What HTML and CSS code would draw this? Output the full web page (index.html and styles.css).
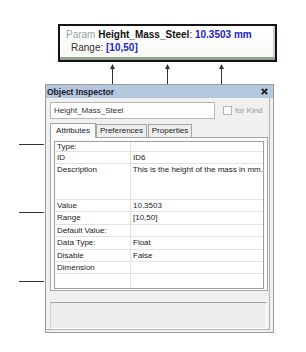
FILE: index.html
```html
<!DOCTYPE html>
<html>
<head>
<meta charset="utf-8">
<link rel="stylesheet" href="styles.css">
</head>
<body>
<div class="page">
  <div class="tip">
    <div class="tip-line"><span class="muted">Param</span> <b>Height_Mass_Steel</b>: <b class="val">10.3503 mm</b></div>
    <div class="tip-line indent">Range: <b class="val">[10,50]</b></div>
  </div>
  <svg class="arrows" width="306" height="22" viewBox="0 0 306 22">
    <g stroke="#333" stroke-width="1" fill="none">
      <line x1="112.5" y1="4" x2="112.5" y2="22"/>
      <line x1="167.5" y1="4" x2="167.5" y2="22"/>
      <line x1="221.5" y1="4" x2="221.5" y2="22"/>
    </g>
    <g fill="#333">
      <polygon points="112.5,2 110,7 115,7"/>
      <polygon points="167.5,2 165,7 170,7"/>
      <polygon points="221.5,2 219,7 224,7"/>
    </g>
  </svg>
  <div class="main">
    <svg class="gutter" width="45" height="249" viewBox="0 0 45 249">
      <g stroke="#333" stroke-width="1">
        <line x1="19" y1="60.5" x2="44" y2="60.5"/>
        <line x1="19" y1="128.5" x2="44" y2="128.5"/>
        <line x1="19" y1="197.5" x2="44" y2="197.5"/>
      </g>
    </svg>
    <div class="dialog">
      <div class="titlebar">
        <span class="title">Object Inspector</span>
        <svg class="close" width="7" height="7" viewBox="0 0 7 7"><path d="M0.8 0.8 L6.2 6.2 M6.2 0.8 L0.8 6.2" stroke="#1a1a1a" stroke-width="1.8"/></svg>
      </div>
      <div class="dbody">
        <div class="namerow">
          <div class="input">Height_Mass_Steel</div>
          <span class="check"></span>
          <span class="forkind">for Kind</span>
        </div>
        <div class="tabs">
          <div class="tab active">Attributes</div>
          <div class="tab">Preferences</div>
          <div class="tab">Properties</div>
        </div>
        <div class="panel">
          <div class="table">
            <div class="row r-type"><div class="k">Type:</div><div class="v"></div></div>
            <div class="row"><div class="k">ID</div><div class="v">ID6</div></div>
            <div class="row r-desc"><div class="k">Description</div><div class="v">This is the height of the mass in mm.</div></div>
            <div class="row"><div class="k">Value</div><div class="v">10.3503</div></div>
            <div class="row r13"><div class="k">Range</div><div class="v">[10,50]</div></div>
            <div class="row"><div class="k">Default Value:</div><div class="v"></div></div>
            <div class="row r13"><div class="k">Data Type:</div><div class="v">Float</div></div>
            <div class="row"><div class="k">Disable</div><div class="v">False</div></div>
            <div class="row"><div class="k">Dimension</div><div class="v"></div></div>
            <div class="row filler"><div class="k"></div><div class="v"></div></div>
          </div>
        </div>
        <div class="status"></div>
      </div>
    </div>
  </div>
</div>
</body>
</html>
```
FILE: styles.css
```css
html, body {
  margin: 0;
  padding: 0;
  background: #fff;
}
body {
  width: 306px;
  height: 352px;
  overflow: hidden;
  font-family: "Liberation Sans", Arial, sans-serif;
}
.page {
  padding-top: 24px;
}
.tip {
  margin-left: 58px;
  width: 219px;
  height: 38px;
  box-sizing: border-box;
  border: 2px solid #141414;
  background: linear-gradient(#ffffff, #f6f9f4);
  box-shadow: inset 0 -3px 0 #93a38d, inset -2px 0 0 #c9d2c5;
  padding: 2px 0 0 6px;
  font-size: 10px;
  line-height: 13px;
  color: #333;
  white-space: nowrap;
}
.tip b { color: #111; }
.tip .muted { color: #98a596; }
.tip .val { color: #2323c4; }
.tip .indent { padding-left: 5px; }
.arrows, .gutter { display: block; }
.main {
  display: flex;
  align-items: flex-start;
}
.dialog {
  width: 229px;
  height: 249px;
  box-sizing: border-box;
  border: 1px solid #9c9c9c;
  background: #f0f0f0;
  box-shadow: inset -3px -2px 0 #f0f0f0, inset -4px -3px 0 #b4b4b4;
  display: flex;
  flex-direction: column;
  font-size: 8px;
  color: #222;
}
.titlebar {
  height: 13px;
  background: #b3c7df;
  display: flex;
  align-items: center;
  justify-content: space-between;
  padding: 0 5px 0 1px;
}
.title {
  font-weight: bold;
  font-size: 8.5px;
  color: #1a1a2a;
}
.close { display: block; }
.dbody {
  padding: 4px 0 0 4px;
  display: flex;
  flex-direction: column;
}
.namerow {
  display: flex;
  align-items: center;
  height: 17px;
}
.input {
  width: 165px;
  height: 17px;
  box-sizing: border-box;
  border: 1px solid #b2b6bc;
  background: #fff;
  padding-left: 3px;
  line-height: 15px;
  color: #333;
}
.check {
  width: 9px;
  height: 9px;
  box-sizing: border-box;
  border: 1px solid #b6b6b6;
  background: #fafafa;
  margin: 0 3px 0 8px;
}
.forkind { color: #9a9a9a; }
.tabs {
  display: flex;
  margin-top: 4px;
  height: 14px;
  align-items: flex-end;
}
.tab {
  height: 13px;
  box-sizing: border-box;
  border: 1px solid #a4a4a4;
  border-bottom: none;
  background: #ededed;
  line-height: 12px;
  padding: 0 2px;
  text-align: center;
  margin-right: 1px;
}
.tab.active {
  height: 15px;
  width: 46px;
  background: #fbfbfb;
  margin-bottom: -1px;
  position: relative;
  z-index: 1;
  line-height: 13px;
  margin-right: 0;
}
.tab:nth-child(2) { width: 51px; }
.tab:nth-child(3) { width: 44px; }
.panel {
  width: 218px;
  height: 154px;
  box-sizing: border-box;
  border: 1px solid #a4a4a4;
  background: #fbfbfb;
  padding: 3px 3px 1px 3px;
}
.table {
  height: 148px;
  box-sizing: border-box;
  border: 1px solid #9e9e9e;
  background: #fff;
  display: flex;
  flex-direction: column;
  overflow: hidden;
}
.row {
  display: flex;
  height: 12px;
  box-sizing: border-box;
  border-bottom: 1px solid #e2e2e2;
  line-height: 11px;
  flex: none;
}
.row .k {
  width: 76px;
  box-sizing: border-box;
  border-right: 1px solid #e2e2e2;
  padding-left: 2px;
  white-space: nowrap;
}
.row .v {
  padding-left: 2px;
  white-space: nowrap;
}
.r-type { height: 10px; line-height: 10px; }
.r-desc { height: 36px; }
.r13 { height: 13px; line-height: 12px; }
.filler { flex: 1; border-bottom: none; }
.status {
  margin-top: 11px;
  width: 217px;
  height: 27px;
  box-sizing: border-box;
  border-top: 1px solid #a0a0a0;
  border-left: 1px solid #d0d0d0;
  border-right: 1px solid #ffffff;
  border-bottom: 1px solid #ffffff;
  background: #ededed;
}
```
